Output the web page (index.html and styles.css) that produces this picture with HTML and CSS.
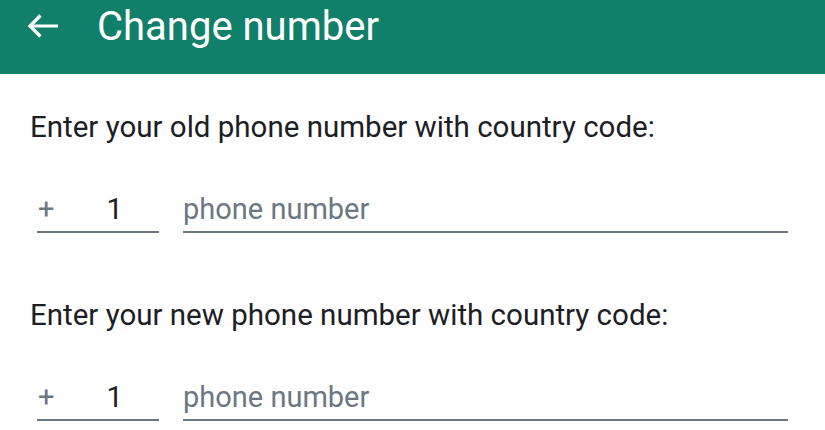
FILE: index.html
```html
<!DOCTYPE html>
<html lang="en">
<head>
    <meta charset="UTF-8">
    <meta name="viewport" content="width=device-width, initial-scale=1.0">
    <title>Change number</title>
    <link rel="stylesheet" href="styles.css">
</head>
<body>
    <header class="toolbar">
        <svg class="back" width="32" height="26" viewBox="0 0 32 26">
            <path d="M31 13H3M13.5 2.5L3 13l10.5 10.5" fill="none" stroke="#fff" stroke-width="3.2"/>
        </svg>
        <h1>Change number</h1>
    </header>
    <main class="content">
        <section class="field-group">
            <p class="label">Enter your old phone number with country code:</p>
            <div class="phone-row">
                <div class="code">
                    <span class="plus">+</span>
                    <span class="cc">1</span>
                </div>
                <div class="number">phone number</div>
            </div>
        </section>
        <section class="field-group">
            <p class="label">Enter your new phone number with country code:</p>
            <div class="phone-row">
                <div class="code">
                    <span class="plus">+</span>
                    <span class="cc">1</span>
                </div>
                <div class="number">phone number</div>
            </div>
        </section>
    </main>
</body>
</html>
```

FILE: styles.css
```css
body {
    margin: 0;
    font-family: Roboto, "Noto Sans", sans-serif;
    background: #fff;
    color: #1c2024;
}
.toolbar {
    display: flex;
    align-items: center;
    height: 74px;
    padding-left: 27px;
    padding-bottom: 22px;
    box-sizing: border-box;
    background: #10806a;
    color: #fff;
}
.back {
    display: block;
    flex: none;
}
.toolbar h1 {
    margin: 0 0 0 38px;
    font-size: 40px;
    font-weight: 400;
}
.content {
    padding: 0 37px 0 30px;
}
.field-group {
    padding-top: 35px;
}
.field-group + .field-group {
    padding-top: 64px;
}
.label {
    margin: 0;
    font-size: 29.5px;
    line-height: 36px;
}
.phone-row {
    display: flex;
    gap: 24px;
    margin-top: 46px;
    margin-left: 7px;
    font-size: 29px;
    line-height: 36px;
}
.code,
.number {
    padding-bottom: 4px;
    border-bottom: 2px solid #6b7882;
}
.code {
    display: flex;
    width: 121px;
    padding-left: 1px;
}
.plus {
    color: #6b7882;
}
.cc {
    margin-left: 52px;
    color: #1c2024;
}
.number {
    flex: 1;
    color: #6b7882;
}
```
